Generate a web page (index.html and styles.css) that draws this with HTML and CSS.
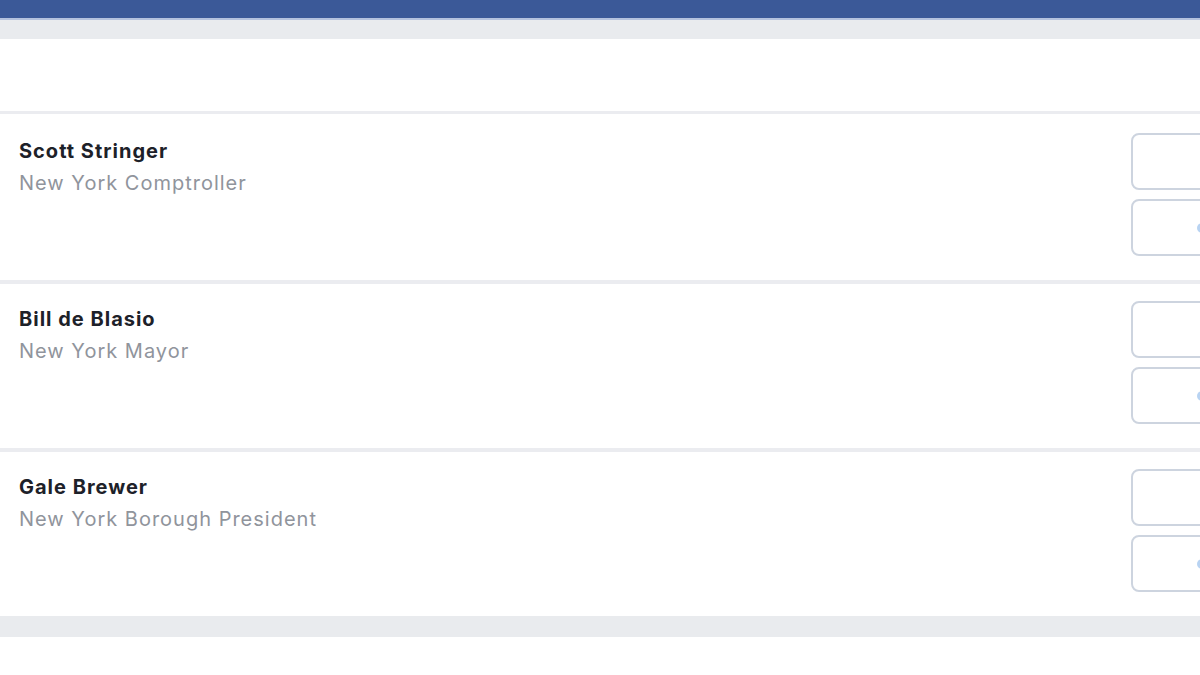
FILE: index.html
```html
<!DOCTYPE html>
<html lang="en">
<head>
    <meta charset="UTF-8">
    <title>Officials</title>
    <link rel="stylesheet" href="styles.css">
</head>
<body>
    <div class="topbar"></div>
    <div class="band"></div>
    <div class="header"></div>
    <div class="list">
        <div class="row">
            <div class="info">
                <div class="name">Scott Stringer</div>
                <div class="role">New York Comptroller</div>
            </div>
            <div class="actions">
                <button class="btn"></button>
                <button class="btn"><span class="dot"></span></button>
            </div>
        </div>
        <div class="row">
            <div class="info">
                <div class="name">Bill de Blasio</div>
                <div class="role">New York Mayor</div>
            </div>
            <div class="actions">
                <button class="btn"></button>
                <button class="btn"><span class="dot"></span></button>
            </div>
        </div>
        <div class="row">
            <div class="info">
                <div class="name">Gale Brewer</div>
                <div class="role">New York Borough President</div>
            </div>
            <div class="actions">
                <button class="btn"></button>
                <button class="btn"><span class="dot"></span></button>
            </div>
        </div>
    </div>
    <div class="band bottom"></div>
</body>
</html>
```

FILE: styles.css
```css
body {
    margin: 0;
    font-family: 'Inter', 'Liberation Sans', sans-serif;
    background-color: #fff;
    overflow: hidden;
}

.topbar {
    height: 18px;
    background-color: #3b5998;
    border-bottom: 2px solid #b4c2de;
}

.band {
    height: 19px;
    background-color: #e9ebee;
}

.band.bottom {
    height: 21px;
}

.header {
    height: 72px;
    background-color: #fff;
}

.list {
    overflow: hidden;
}

.row {
    display: flex;
    justify-content: space-between;
    align-items: flex-start;
    height: 169px;
    box-sizing: border-box;
    border-top: 3px solid #ebecf0;
    padding: 19px 0 0 19px;
}

.row + .row {
    border-top-width: 4px;
    height: 168px;
    padding-top: 17px;
}

.info {
    padding-top: 6px;
}

.name {
    font-size: 20px;
    font-weight: bold;
    letter-spacing: 1px;
    color: #1d2129;
    line-height: 24px;
}

.role {
    font-size: 20px;
    letter-spacing: 1px;
    color: #90949c;
    line-height: 24px;
    margin-top: 8px;
}

.actions {
    display: flex;
    flex-direction: column;
    gap: 9px;
    margin-right: -70px;
}

.btn {
    position: relative;
    width: 139px;
    height: 57px;
    background-color: #fff;
    border: 2px solid #cdd4df;
    border-radius: 8px;
    padding: 0;
}

.dot {
    position: absolute;
    left: 64px;
    top: 22px;
    width: 10px;
    height: 10px;
    border-radius: 50%;
    background-color: #b8d3f2;
}
```
